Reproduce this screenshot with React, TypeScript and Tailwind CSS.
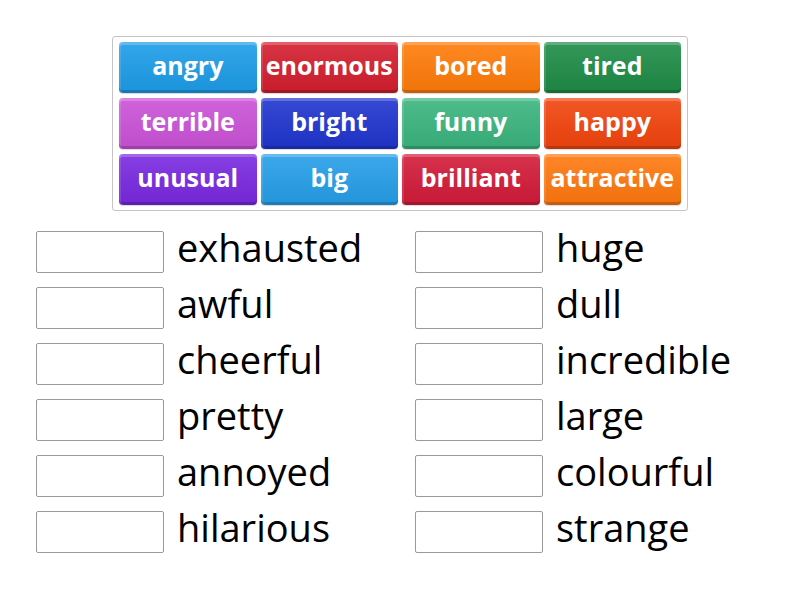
const tiles = [
  { label: "angry", bg: "bg-[#1e9de8]" },
  { label: "enormous", bg: "bg-[#d41f2f]" },
  { label: "bored", bg: "bg-[#ff7c0a]" },
  { label: "tired", bg: "bg-[#1f8c47]" },
  { label: "terrible", bg: "bg-[#cb53d8]" },
  { label: "bright", bg: "bg-[#2136cf]" },
  { label: "funny", bg: "bg-[#3bb57f]" },
  { label: "happy", bg: "bg-[#f2450f]" },
  { label: "unusual", bg: "bg-[#7a2ae0]" },
  { label: "big", bg: "bg-[#279fe9]" },
  { label: "brilliant", bg: "bg-[#d31c3a]" },
  { label: "attractive", bg: "bg-[#ff7910]" },
];

const left = ["exhausted", "awful", "cheerful", "pretty", "annoyed", "hilarious"];
const right = ["huge", "dull", "incredible", "large", "colourful", "strange"];

function Slot({ word }: { word: string }) {
  return (
    <div className="flex items-start gap-[13px]">
      <div className="h-[42px] w-[128px] shrink-0 rounded-[2px] border border-[#9a9a9a] bg-white" />
      <span className="text-[38px] leading-[32px] text-black">{word}</span>
    </div>
  );
}

export default function App() {
  return (
    <div className="min-h-screen w-[800px] bg-white pt-[36px] font-['Open_Sans',sans-serif]">
      <div className="mx-auto grid w-[576px] grid-cols-4 gap-x-[4px] gap-y-[5px] rounded-[3px] border border-[#c4c4c4] px-[6px] py-[5px]">
        {tiles.map((t) => (
          <div
            key={t.label}
            className={`${t.bg} flex h-[51px] items-center justify-center rounded-[4px] bg-gradient-to-b from-white/10 to-black/5 pb-[5px] text-[25px] font-bold text-white shadow-[inset_0_3px_0_rgba(255,255,255,0.22),inset_2px_0_0_rgba(255,255,255,0.12),inset_0_-3px_0_rgba(0,0,0,0.18),0_1px_1px_rgba(0,0,0,0.15)]`}
          >
            <span className="leading-none">{t.label}</span>
          </div>
        ))}
      </div>
      <div className="mt-[20px] ml-[36px] grid w-[740px] grid-cols-[379px_1fr]">
        <div className="flex flex-col gap-[14px]">
          {left.map((w) => (
            <Slot key={w} word={w} />
          ))}
        </div>
        <div className="flex flex-col gap-[14px]">
          {right.map((w) => (
            <Slot key={w} word={w} />
          ))}
        </div>
      </div>
    </div>
  );
}
